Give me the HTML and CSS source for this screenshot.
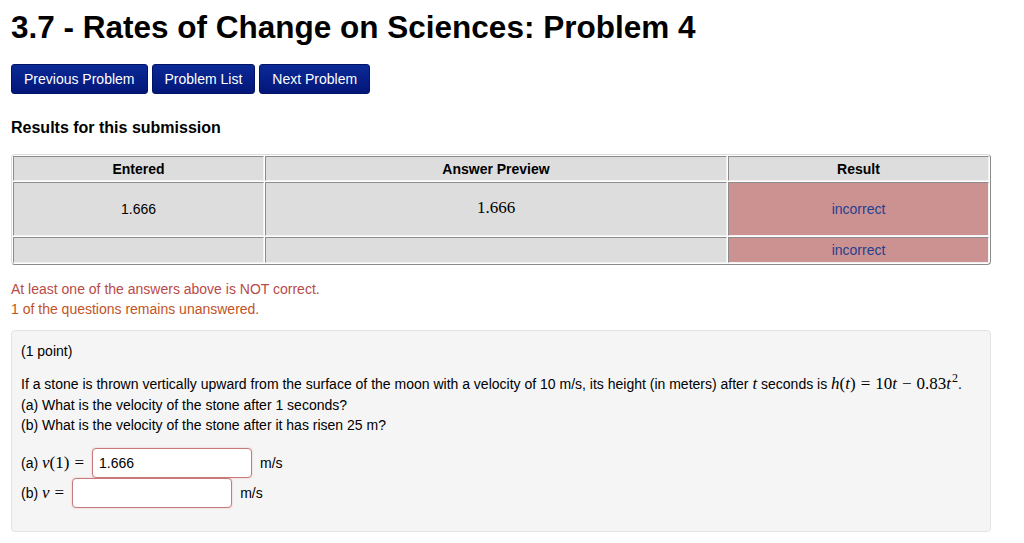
FILE: index.html
```html
<!DOCTYPE html>
<html lang="en">
<head>
<meta charset="utf-8">
<title>3.7 - Rates of Change on Sciences: Problem 4</title>
<link rel="stylesheet" href="styles.css">
</head>
<body>
<main class="page">
  <h1 class="title">3.7 - Rates of Change on Sciences: Problem 4</h1>

  <nav class="nav-buttons">
    <a class="btn" href="#">Previous Problem</a>
    <a class="btn" href="#">Problem List</a>
    <a class="btn" href="#">Next Problem</a>
  </nav>

  <h2 class="results-heading">Results for this submission</h2>

  <table class="results">
    <thead>
      <tr>
        <th class="col-entered">Entered</th>
        <th class="col-preview">Answer Preview</th>
        <th class="col-result">Result</th>
      </tr>
    </thead>
    <tbody>
      <tr class="row-tall">
        <td>1.666</td>
        <td class="preview"><span class="preview-math">1.666</span></td>
        <td class="result-bad">incorrect</td>
      </tr>
      <tr class="row-short">
        <td></td>
        <td></td>
        <td class="result-bad">incorrect</td>
      </tr>
    </tbody>
  </table>

  <div class="messages">
    <div class="msg-error">At least one of the answers above is NOT correct.</div>
    <div class="msg-warn">1 of the questions remains unanswered.</div>
  </div>

  <section class="problem">
    <div class="points">(1 point)</div>
    <div class="statement">
      <div class="line nowrap">If a stone is thrown vertically upward from the surface of the moon with a velocity of 10 m/s, its height (in meters) after <span class="math"><i>t</i></span> seconds is <span class="math"><i>h</i>(<i>t</i>)<span class="op">=</span>10<i>t</i><span class="op">−</span>0.83<i>t</i><sup>2</sup></span>.</div>
      <div class="line">(a) What is the velocity of the stone after 1 seconds?</div>
      <div class="line">(b) What is the velocity of the stone after it has risen 25 m?</div>
    </div>
    <div class="answers">
      <div class="answer-row">
        <span class="label">(a) <span class="math"><i>v</i>(1)<span class="op">=</span></span></span>
        <input class="answer-input" type="text" value="1.666">
        <span class="unit">m/s</span>
      </div>
      <div class="answer-row">
        <span class="label">(b) <span class="math"><i>v</i><span class="op">=</span></span></span>
        <input class="answer-input" type="text" value="">
        <span class="unit">m/s</span>
      </div>
    </div>
  </section>
</main>
</body>
</html>
```

FILE: styles.css
```css
* { box-sizing: border-box; }

html, body {
  margin: 0;
  padding: 0;
  background: #ffffff;
}

body {
  font-family: "Liberation Sans", Arial, Helvetica, sans-serif;
  font-size: 14px;
  line-height: 20px;
  color: #000;
}

.page {
  width: 980px;
  margin-left: 11px;
}

.title {
  font-size: 31.5px;
  line-height: 36px;
  font-weight: bold;
  margin: 9px 0 0 0;
  color: #000;
}

.nav-buttons {
  display: flex;
  gap: 4px;
  margin-top: 19px;
}

.btn {
  display: inline-block;
  padding: 4px 12px;
  line-height: 20px;
  font-size: 14px;
  color: #fff;
  text-decoration: none;
  background: linear-gradient(#0b2a96, #031679);
  border: 1px solid #021466;
  border-radius: 3px;
}

.results-heading {
  font-size: 16px;
  line-height: 20px;
  font-weight: bold;
  margin: 24px 0 0 0;
}

.results {
  margin-top: 16px;
  width: 980px;
  border-collapse: separate;
  border-spacing: 1px;
  border: 1px solid;
  border-color: #dcdcdc #8a8a8a #8a8a8a #dcdcdc;
  border-radius: 4px;
  table-layout: fixed;
}

.results th,
.results td {
  background: #dddddd;
  text-align: center;
  vertical-align: middle;
  border: 1px solid;
  border-color: #8c8c8c #f2f2f2 #f2f2f2 #8c8c8c;
  padding: 0;
}

.col-entered { width: 251px; }
.col-preview { width: 462px; }
.col-result { width: 261px; }

.results th {
  height: 25px;
  font-weight: bold;
  font-size: 14px;
}

.row-tall td { height: 54px; }
.row-short td { height: 26px; }

.preview-math {
  font-family: "Liberation Serif", "Times New Roman", serif;
  font-size: 17px;
  position: relative;
  top: -1px;
}

.results td.result-bad {
  background: #cc9292;
  color: #263f8e;
}

.messages {
  margin-top: 14px;
}

.msg-error { color: #b94a48; }
.msg-warn { color: #c2531f; }

.problem {
  margin-top: 11px;
  background: #f5f5f5;
  border: 1px solid #e3e3e3;
  border-radius: 4px;
  padding: 10px 9px 23px 9px;
}

.points {
  line-height: 20px;
  margin-bottom: 12px;
}

.line {
  line-height: 20px;
}

.line.nowrap {
  white-space: nowrap;
  line-height: 21px;
}

.math {
  font-family: "Liberation Serif", "Times New Roman", serif;
  font-size: 17px;
}

.math .op {
  margin: 0 5px;
}

.label .math .op {
  margin-right: 0;
}

.math sup {
  font-size: 12px;
  line-height: 0;
  vertical-align: 7px;
  margin-left: 1px;
}

.answers {
  margin-top: 13px;
}

.answer-row {
  display: flex;
  align-items: center;
  height: 30px;
}

.answer-input {
  width: 160px;
  height: 30px;
  margin-left: 8px;
  padding: 4px 6px;
  font-family: "Liberation Sans", Arial, Helvetica, sans-serif;
  font-size: 14px;
  color: #000;
  background: #fff;
  border: 1px solid #c97b7b;
  border-radius: 4px;
  box-shadow: 0 0 2px rgba(200, 90, 90, 0.35);
  outline: none;
}

.unit {
  margin-left: 8px;
}
```
